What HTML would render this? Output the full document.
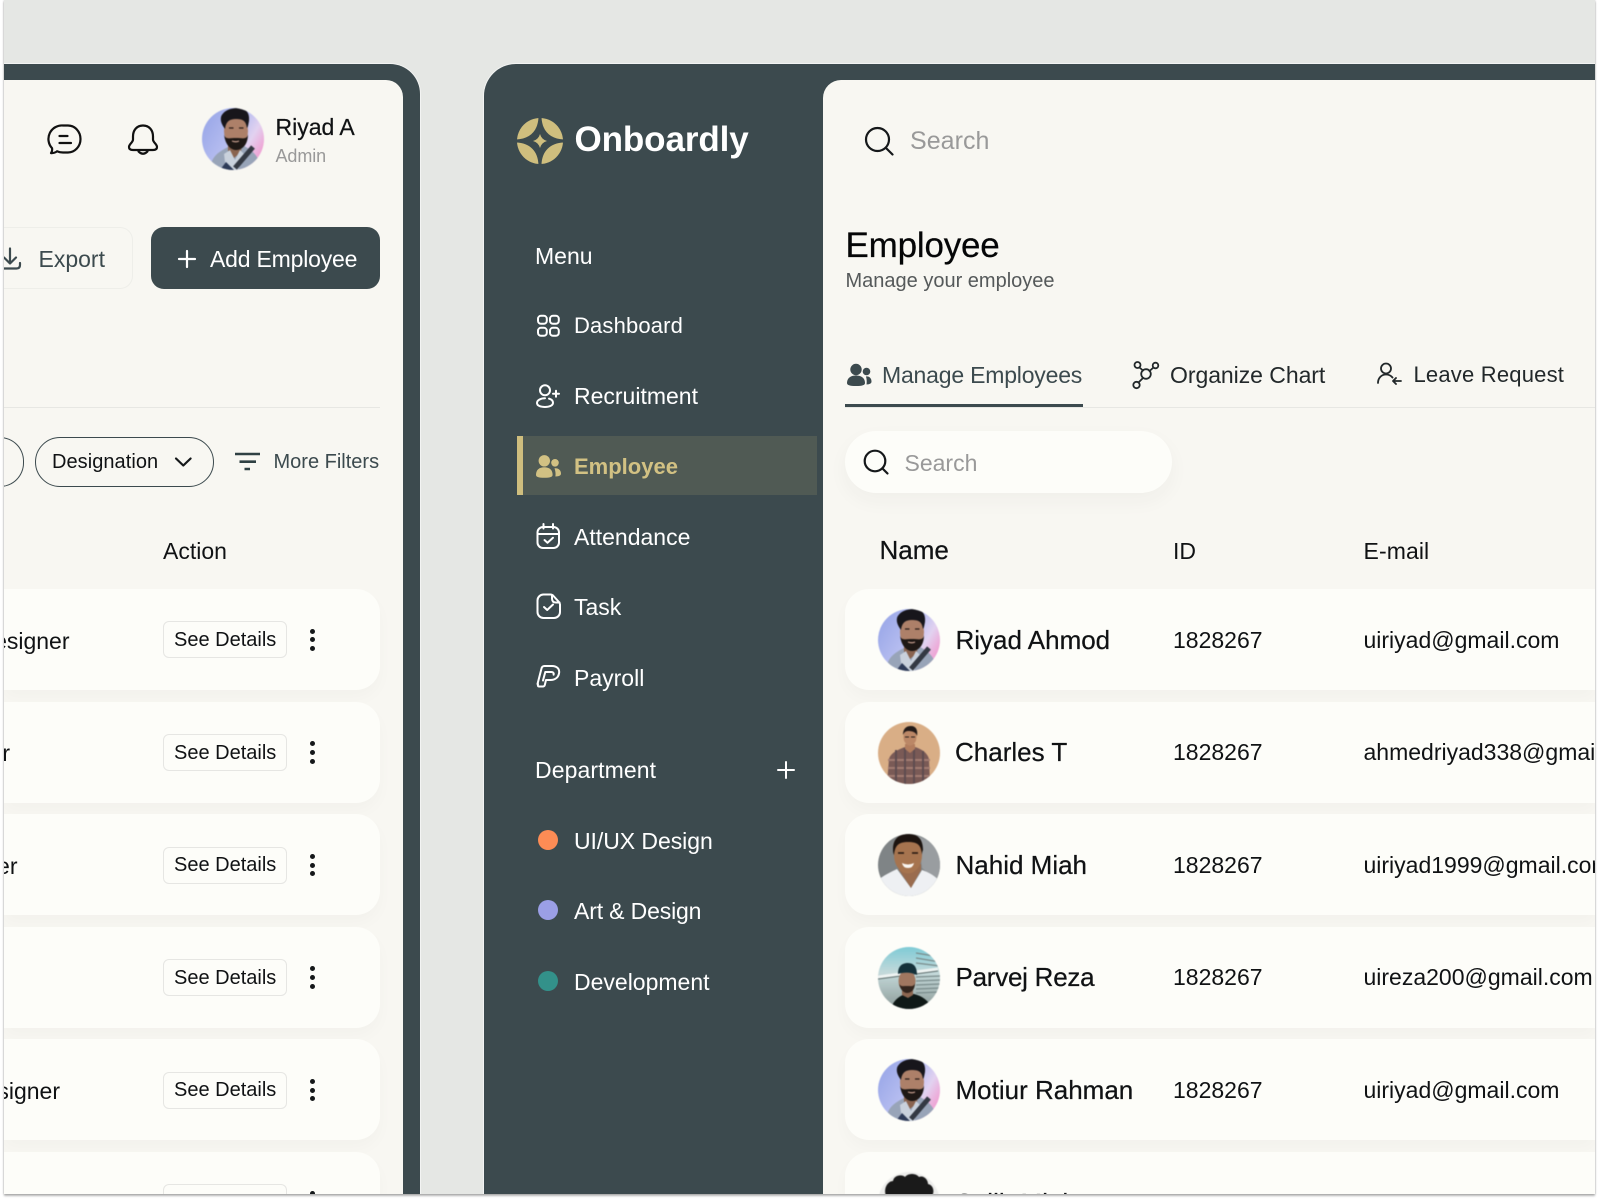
<!DOCTYPE html>
<html lang="en"><head><meta charset="utf-8"><title>Onboardly</title>
<style>
*{box-sizing:border-box;margin:0;padding:0}
html,body{width:1600px;height:1200px;overflow:hidden;background:#fff;font-family:"Liberation Sans",sans-serif}
#sh{position:absolute;left:4px;top:0;width:1591px;height:1194px;box-shadow:0 2px 2px rgba(0,0,0,.28),0 0 2px rgba(0,0,0,.22)}
#clip{position:absolute;left:4px;top:0;width:1591px;height:1194px;background:#e5e7e4;overflow:hidden}
#in{position:absolute;left:-4px;top:0;width:1600px;height:1194px}
.abs,.t,svg.i{position:absolute}
.t{white-space:nowrap;line-height:1;font-size:calc(var(--s)*1px);top:calc(var(--b)*1px - var(--s)*.8465px);color:#101214}
.w{color:#fff}.d{color:#3c4a4e}.g{color:#999}
.m{-webkit-text-stroke:.22px currentColor}
.dark{background:#3c4a4e;box-shadow:0 0 0 1px rgba(255,255,255,.55)}
.panel{background:#f8f7f2}
.row{position:absolute;height:101px;background:#fdfdf9;border-radius:24px;box-shadow:0 8px 16px rgba(60,60,40,.025)}
.rl{left:4px;width:376px;border-radius:0 24px 24px 0}
.rr{left:845px;width:750px;border-radius:24px 0 0 24px}
.see{position:absolute;left:163px;width:124px;height:37px;border:1px solid #e6e6e3;border-radius:6px;background:#fdfdf9}
.dot{position:absolute;left:310px;width:5.400px;height:5.400px;border-radius:50%;background:#15181a}
.av{position:absolute;left:878px;width:62px;height:62px;filter:blur(.45px)}
svg.i{overflow:hidden;left:0;top:0;width:1600px;height:1194px;pointer-events:none}
.st{fill:none;stroke-linecap:round;stroke-linejoin:round}
.cut{position:absolute;overflow:hidden;white-space:nowrap}
</style></head><body>
<div id="sh"></div>
<svg width="0" height="0" style="position:absolute">
<defs>
<clipPath id="cc"><circle cx="31" cy="31" r="31"/></clipPath>
<linearGradient id="gr" x1="0" y1="0" x2="1" y2=".6"><stop offset="0" stop-color="#93a2e6"/><stop offset=".55" stop-color="#b6bdf0"/><stop offset=".8" stop-color="#e2d2f0"/><stop offset="1" stop-color="#eea6d6"/></linearGradient>
<linearGradient id="gp" x1="0" y1="0" x2="0" y2="1"><stop offset="0" stop-color="#7fcbd6"/><stop offset=".42" stop-color="#c4d9da"/><stop offset="1" stop-color="#8d9b98"/></linearGradient>
<symbol id="a1" viewBox="0 0 62 62"><g clip-path="url(#cc)">
<rect width="62" height="62" fill="url(#gr)"/>
<path d="M8 62C9 50 14 45 26 39L40 37C48 41 56 45 60 62Z" fill="#98a4b8"/>
<path d="M26 34H40L39 44L32 50L26 44Z" fill="#8a6450"/>
<path d="M22 46L28 42L33 52L38 42L42 46L36 62H24Z" fill="#c9d1dc"/>
<path d="M18 62L24 54L32 62Z" fill="#2e3b58"/>
<path d="M51 39L33 60" stroke="#343943" stroke-width="5"/>
<ellipse cx="34" cy="23" rx="12" ry="15" fill="#ad8069"/>
<path d="M22 26C23 37 29 42 34 42C40 42 46 37 46 26C45 32 41 30 34 30C27 30 23 32 22 26Z" fill="#1e1815"/>
<path d="M19 9C21 3 28 0 36 0C43 0 48 4 47 13C46 18 46 19 45 20C44 13 41 11 34 11C28 11 24 13 23 21C21 18 18 14 19 9Z" fill="#17161b"/>
<path d="M27 20h4.500M37 20h4.500" stroke="#2a1d18" stroke-width="1.300"/>
<path d="M30 33q4 1.500 7 0" stroke="#c8a090" stroke-width="1.200" fill="none"/>
</g></symbol>
<symbol id="a2" viewBox="0 0 62 62"><g clip-path="url(#cc)">
<rect width="62" height="62" fill="#d9ae86"/>
<path d="M9 62L11 37C13 30 22 27 27 25H37C43 27 49 30 51 37L52 62Z" fill="#7a5a56"/>
<path d="M10 38H52M10 46H52M10 54H52" stroke="#a27c72" stroke-width="2"/>
<path d="M18 28V62M27 26V62M36 26V62M45 29V62" stroke="#5e4c50" stroke-width="2"/>
<path d="M27 22H37V27L32 31L27 27Z" fill="#b27d5e"/>
<ellipse cx="32" cy="15" rx="6.500" ry="8.500" fill="#bb8766"/>
<path d="M25 13C25 6 29 4 33 4C38 4 40 8 39 14C38 10 34 9 30 9C27 9 26 11 25 13Z" fill="#221a18"/>
<path d="M27 15h4M33 15h4" stroke="#2a201c" stroke-width="1"/>
</g></symbol>
<symbol id="a3" viewBox="0 0 62 62"><g clip-path="url(#cc)">
<rect width="62" height="62" fill="#7f8486"/>
<path d="M40 2L62 12V50L44 34Z" fill="#999da0"/>
<path d="M0 62V46C6 41 13 38 19 35L33 54L44 36C50 38 58 42 62 48V62Z" fill="#eef0f3"/>
<path d="M20 30H43L43 36L33 54L21 36Z" fill="#9a6c4e"/>
<ellipse cx="30" cy="21" rx="14" ry="18.500" fill="#a6744f"/>
<path d="M15 15C15 4 22 0 30 0C39 0 45 4 45 16C44 18 44 20 44 21C43 11 40 8 30 8C21 8 17 11 16 21C15 19 15 17 15 15Z" fill="#1c1410"/>
<path d="M20 19h6M34 19h6" stroke="#20140e" stroke-width="1.600"/>
<path d="M24 29Q30 32 36 29Q35 34 30 34Q25 34 24 29Z" fill="#fbf7f2"/>
</g></symbol>
<symbol id="a4" viewBox="0 0 62 62"><g clip-path="url(#cc)">
<rect width="62" height="62" fill="url(#gp)"/>
<path d="M0 30L60 22" stroke="#eef3f2" stroke-width="3"/>
<path d="M0 32L60 24" stroke="#5e6d6c" stroke-width="1"/>
<path d="M38 6L62 10M38 11L62 15M38 16L62 19M38 30L62 29M38 34L62 33M38 38L62 37M38 42L62 41M38 46L62 45" stroke="#7a8c8c" stroke-width="1.200"/>
<path d="M13 62C15 53 22 49 27 47H36C44 49 50 53 55 62Z" fill="#0f1917"/>
<path d="M24 40H35V48L30 51L24 48Z" fill="#8c6650"/>
<ellipse cx="29" cy="34" rx="8.500" ry="11" fill="#a07760"/>
<path d="M21 36C22 43 26 46 29 46C33 46 37 43 37 36C36 40 33 39 29 39C25 39 22 40 21 36Z" fill="#34261e"/>
<path d="M20 27C20 19 24 16 30 16C36 16 39 20 39 28C33 25 26 25 20 27Z" fill="#15313a"/>
</g></symbol>
<symbol id="a5" viewBox="0 0 62 62"><g clip-path="url(#cc)">
<rect width="62" height="62" fill="#ededeb"/>
<path d="M8 24C5 16 10 9 15 9C16 3 24 2 27 5C30 1 38 1 41 5C46 3 50 8 50 12C55 13 57 19 54 24Z" fill="#1a1a1a"/>
</g></symbol>
</defs></svg>

<div id="clip"><div id="in">
<!-- LEFT PANEL -->
<div class="abs dark" style="left:0;top:64px;width:420px;height:1130px;border-radius:0 30px 0 0"></div>
<div class="abs panel" style="left:0;top:80px;width:403px;height:1114px;border-radius:0 17px 0 0"></div>

<svg class="av" style="left:202px;top:108px"><use href="#a1" width="62" height="62"/></svg>
<div class="t m" style="left:275.500px;--b:135;--s:23">Riyad A</div>
<div class="t g" style="left:275.500px;--b:162;--s:18;letter-spacing:-.1px">Admin</div>

<div class="abs" style="left:0;top:227px;width:133px;height:62px;border:1.500px solid #eeeee9;border-left:0;border-radius:0 13px 13px 0"></div>
<div class="t d" style="left:38.500px;--b:267;--s:23">Export</div>
<div class="abs" style="left:151px;top:227px;width:229px;height:62px;background:#3c4a4e;border-radius:13px"></div>
<div class="t w" style="left:210px;--b:267;--s:23;letter-spacing:-.2px">Add Employee</div>

<div class="abs" style="left:4px;top:407px;width:376px;height:1px;background:#e7e7e3"></div>
<div class="abs" style="left:0;top:437px;width:24px;height:50px;border:1.500px solid #3c4a4e;border-left:0;border-radius:0 25px 25px 0"></div>
<div class="abs" style="left:35px;top:437px;width:179px;height:50px;border:1.500px solid #3c4a4e;border-radius:25px"></div>
<div class="t" style="left:52px;--b:469;--s:20;letter-spacing:.05px">Designation</div>
<div class="t d" style="left:273.500px;--b:469;--s:20">More Filters</div>
<div class="t" style="left:163px;--b:559;--s:23">Action</div>

<div class="row rl" style="top:589px"></div>
<div class="row rl" style="top:702px"></div>
<div class="row rl" style="top:814px"></div>
<div class="row rl" style="top:927px"></div>
<div class="row rl" style="top:1039px"></div>
<div class="row rl" style="top:1152px;height:42px;border-radius:0 24px 0 0"></div>

<div class="cut" style="left:4px;top:625px;width:70px;height:34px"><div class="t" style="right:4.500px;--b:24;--s:23">Designer</div></div>
<div class="cut" style="left:4px;top:737px;width:70px;height:34px"><div class="t" style="right:64px;--b:24;--s:23">Developer</div></div>
<div class="cut" style="left:4px;top:850px;width:70px;height:34px"><div class="t" style="right:56.500px;--b:24;--s:23">Manager</div></div>
<div class="cut" style="left:4px;top:1075px;width:70px;height:34px"><div class="t" style="right:14px;--b:24;--s:23">Designer</div></div>

<div class="see" style="top:621px"></div><div class="t" style="left:174px;--b:647;--s:20">See Details</div>
<div class="see" style="top:734px"></div><div class="t" style="left:174px;--b:760;--s:20">See Details</div>
<div class="see" style="top:846.500px"></div><div class="t" style="left:174px;--b:872;--s:20">See Details</div>
<div class="see" style="top:959px"></div><div class="t" style="left:174px;--b:985;--s:20">See Details</div>
<div class="see" style="top:1071.500px"></div><div class="t" style="left:174px;--b:1097;--s:20">See Details</div>
<div class="see" style="top:1184px;height:10px;border-bottom:0;border-radius:6px 6px 0 0"></div>

<div class="dot" style="top:628.500px"></div><div class="dot" style="top:637px"></div><div class="dot" style="top:646px"></div>
<div class="dot" style="top:741px"></div><div class="dot" style="top:750px"></div><div class="dot" style="top:758.500px"></div>
<div class="dot" style="top:854px"></div><div class="dot" style="top:862.500px"></div><div class="dot" style="top:871px"></div>
<div class="dot" style="top:966px"></div><div class="dot" style="top:975px"></div><div class="dot" style="top:983.500px"></div>
<div class="dot" style="top:1079px"></div><div class="dot" style="top:1087.500px"></div><div class="dot" style="top:1096px"></div>
<div class="dot" style="top:1191px;height:3px;border-radius:3px 3px 0 0"></div>

<!-- RIGHT PANEL -->
<div class="abs dark" style="left:484px;top:64px;width:1116px;height:1130px;border-radius:32px 0 0 0"></div>
<div class="abs panel" style="left:822.500px;top:80px;width:777.500px;height:1114px;border-radius:18px 0 0 0"></div>

<div class="t w" style="left:574.500px;--b:152;--s:35;font-weight:700;letter-spacing:-.1px">Onboardly</div>
<div class="t w" style="left:535px;--b:264;--s:23">Menu</div>
<div class="t w" style="left:574px;--b:334;--s:22;letter-spacing:.15px">Dashboard</div>
<div class="t w" style="left:574px;--b:404;--s:23">Recruitment</div>
<div class="abs" style="left:517px;top:436px;width:300px;height:59px;background:#505a54"></div>
<div class="abs" style="left:517px;top:436px;width:6px;height:59px;background:#cfbe7e"></div>
<div class="t" style="left:574px;--b:475;--s:22;color:#d2c183;font-weight:700">Employee</div>
<div class="t w" style="left:574px;--b:545;--s:23">Attendance</div>
<div class="t w" style="left:574px;--b:615;--s:23">Task</div>
<div class="t w" style="left:574px;--b:686;--s:23">Payroll</div>
<div class="t w" style="left:535px;--b:778;--s:23;letter-spacing:.1px">Department</div>
<div class="t w" style="left:574px;--b:849;--s:23;letter-spacing:-.05px">UI/UX Design</div>
<div class="t w" style="left:574px;--b:919;--s:23;letter-spacing:-.15px">Art &amp; Design</div>
<div class="t w" style="left:574px;--b:990;--s:23">Development</div>
<div class="abs" style="left:538px;top:830px;width:20px;height:20px;border-radius:50%;background:#fd8c55"></div>
<div class="abs" style="left:538px;top:900px;width:20px;height:20px;border-radius:50%;background:#9b9fe6"></div>
<div class="abs" style="left:538px;top:970.500px;width:20px;height:20px;border-radius:50%;background:#33918a"></div>

<div class="t g" style="left:910px;--b:150;--s:25;letter-spacing:.05px">Search</div>
<div class="t m" style="left:845.500px;--b:258;--s:35;color:#050607;letter-spacing:-.2px">Employee</div>
<div class="t" style="left:845.500px;--b:288;--s:20;color:#55595a">Manage your employee</div>
<div class="t d" style="left:882px;--b:383;--s:23;letter-spacing:-.2px">Manage Employees</div>
<div class="t" style="left:1170px;--b:383;--s:23;color:#22282a;letter-spacing:-.05px">Organize Chart</div>
<div class="t" style="left:1413.500px;--b:383;--s:22;color:#22282a;letter-spacing:.2px">Leave Request</div>
<div class="abs" style="left:845px;top:407px;width:750px;height:1px;background:#e7e7e3"></div>
<div class="abs" style="left:845px;top:403.500px;width:238px;height:3px;background:#3c4a4e"></div>
<div class="abs" style="left:845px;top:431px;width:327px;height:62px;border-radius:31px;background:#fdfdf9;box-shadow:0 8px 20px rgba(60,60,40,.04)"></div>
<div class="t g" style="left:904.500px;--b:471;--s:23">Search</div>
<div class="t m" style="left:879.500px;--b:559;--s:26">Name</div>
<div class="t" style="left:1173px;--b:559;--s:23">ID</div>
<div class="t" style="left:1363.500px;--b:559;--s:23;letter-spacing:.1px">E-mail</div>

<div class="row rr" style="top:589px"></div>
<div class="row rr" style="top:702px"></div>
<div class="row rr" style="top:814px"></div>
<div class="row rr" style="top:927px"></div>
<div class="row rr" style="top:1039px"></div>
<div class="row rr" style="top:1152px;height:42px;border-radius:24px 0 0 0"></div>

<svg class="av" style="top:609px"><use href="#a1" width="62" height="62"/></svg>
<svg class="av" style="top:721.500px"><use href="#a2" width="62" height="62"/></svg>
<svg class="av" style="top:834px"><use href="#a3" width="62" height="62"/></svg>
<svg class="av" style="top:946.500px"><use href="#a4" width="62" height="62"/></svg>
<svg class="av" style="top:1059px"><use href="#a1" width="62" height="62"/></svg>
<div class="cut" style="left:870px;top:1165px;width:80px;height:29px"><svg class="av" style="left:8px;top:6.500px"><use href="#a5" width="62" height="62"/></svg></div>

<div class="t m" style="left:955.500px;--b:649;--s:26">Riyad Ahmod</div>
<div class="t m" style="left:955px;--b:761;--s:26">Charles T</div>
<div class="t m" style="left:955.500px;--b:874;--s:26">Nahid Miah</div>
<div class="t m" style="left:955.500px;--b:986;--s:26;letter-spacing:-.25px">Parvej Reza</div>
<div class="t m" style="left:955.500px;--b:1099;--s:26">Motiur Rahman</div>
<div class="cut" style="left:950px;top:1180px;width:200px;height:14px"><div class="t m" style="left:5.500px;--b:32;--s:26">Sajib Miah</div></div>

<div class="t" style="left:1173px;--b:648;--s:23">1828267</div>
<div class="t" style="left:1173px;--b:760;--s:23">1828267</div>
<div class="t" style="left:1173px;--b:873;--s:23">1828267</div>
<div class="t" style="left:1173px;--b:985;--s:23">1828267</div>
<div class="t" style="left:1173px;--b:1098;--s:23">1828267</div>

<div class="t" style="left:1363.500px;--b:648;--s:23">uiriyad@gmail.com</div>
<div class="cut" style="left:1363.500px;top:730px;width:231.500px;height:40px"><div class="t" style="left:0;--b:30;--s:23">ahmedriyad338@gmail.com</div></div>
<div class="cut" style="left:1363.500px;top:843px;width:231.500px;height:40px"><div class="t" style="left:0;--b:30;--s:23">uiriyad1999@gmail.com</div></div>
<div class="t" style="left:1363.500px;--b:985;--s:23">uireza200@gmail.com</div>
<div class="t" style="left:1363.500px;--b:1098;--s:23">uiriyad@gmail.com</div>

<!-- ICONS -->
<svg class="i" viewBox="0 0 1600 1194">
<!-- logo -->
<g transform="translate(0 1)">
<circle cx="540" cy="140" r="23" fill="#cfbe7e"/>
<path d="M538.500 116H541.500C542 130 550 138 564 138.500V141.500C550 142 542 150 541.500 164H538.500C538 150 530 142 516 141.500V138.500C530 138 538 130 538.500 116Z" fill="#3c4a4e"/>
<path d="M540 133Q541.500 138.500 547 140Q541.500 141.500 540 147Q538.500 141.500 533 140Q538.500 138.500 540 133Z" fill="#cfbe7e"/>
</g>
<!-- top left icons -->
<g class="st" stroke="#111" stroke-width="2.200">
<path transform="translate(1 0)" d="M62 125.500h5a12.500 13.500 0 0 1 0 27h-5q-3.500 0-6-1.200q-2.500 2-6 1.800q1.600-2.200 1-5a13.500 13.500 0 0 1 11-22.600z"/>
<path d="M59.500 136h8M59.500 143h11.500"/>
<path d="M143 125.500c-6.500 0-10 5-10 11v3c0 3-4 4.500-4 7.500c0 2 1.500 3 4 3h20c2.500 0 4-1 4-3c0-3-4-4.500-4-7.500v-3c0-6-3.500-11-10-11z"/>
<path d="M138.500 151.500q4.500 4.500 9 0"/>
</g>
<g class="st" stroke="#3c4a4e" stroke-width="2.200">
<path d="M10 248.500v14.500M4 257.500l6 6l6-6M4 268.500h12.500q3.500 0 3.500-3.500v-2"/>
</g>
<path d="M179 259h16M187 251v16" stroke="#fff" stroke-width="2.200" fill="none" stroke-linecap="round"/>
<path d="M176 458.500l7.300 7l7.300-7" class="st" stroke="#15181a" stroke-width="2.200"/>
<path d="M235 454h25M239.500 461.700h16.500M244.500 469h5.500" stroke="#2f4043" stroke-width="2.600" fill="none"/>
<!-- sidebar -->
<g class="st" stroke="#fff" stroke-width="2">
<g transform="translate(0 .8)">
<rect x="538" y="315" width="8.800" height="8" rx="3"/><rect x="550" y="315" width="8.800" height="8" rx="3"/>
<rect x="538" y="327" width="8.800" height="8" rx="3"/><rect x="550" y="327" width="8.800" height="8" rx="3"/>
<circle cx="545" cy="389.500" r="5"/>
<path d="M545 397.500c-4.500 0-8 2-8 4.700s3.500 4 8 4s8-1.500 8-4.200c0-2-1.500-3.500-4-4.200"/>
<path d="M553 393h6M556 390v6"/>
</g>
<rect x="537.500" y="527" width="21.500" height="21" rx="5.500"/>
<path d="M538 534h21M543.500 524v4.500M553 524v4.500"/>
<path d="M544.500 540l3 2.800l5.500-5"/>
<path d="M543.500 594.500h7c1.500 0 2 .3 3 1.500l5 5.500c1 1 1.500 2 1.500 3v7.500a6 6 0 0 1-6 6h-10.500a6 6 0 0 1-6-6v-11.500a6 6 0 0 1 6-6z"/>
<path d="M552 595.500v3q0 4 4 4h3.500"/>
<path d="M544 607l3.200 3l5.800-5.500"/>
<path d="M537.500 684l4-15.500q.6-2.500 3-2.500h7.500c5 0 8 3 7 7.500c-.8 4-4 6.500-8.500 6.500h-4.500l-1.200 5q-.4 1.500-2 1.500h-4q-1.300 0-.8-2.500z"/>
<path d="M543 680.500l2.300-8.500h6c1.800 0 2.700 1 2.300 2.700"/>
<path d="M778 770h16M786 762v16"/>
</g>
<g fill="#d2c183" transform="translate(0 .8)">
<circle cx="544.300" cy="460" r="5.700"/><circle cx="555" cy="462" r="3.800"/>
<path d="M536 474c0-5 3.500-7.500 8.300-7.500s8.300 2.500 8.300 7.500c0 2-2 3-8.300 3s-8.300-1-8.300-3z"/>
<path d="M554.500 467.500c3.800-.5 6.500 1.800 6.500 5.200c0 2-1.500 2.800-5.600 3c.5-3-.1-5.800-.9-8.200z"/>
</g>
<!-- search -->
<g class="st" stroke="#15181a" stroke-width="2.200">
<circle cx="877.500" cy="139.500" r="11.500"/><path d="M886 148l6.500 6.500"/>
<circle cx="875" cy="461" r="10.300"/><path d="M882.500 468.500l5 5"/>
</g>
<!-- tabs -->
<g fill="#3c4a4e">
<circle cx="856" cy="369.500" r="5.700"/><circle cx="866.500" cy="371.500" r="3.800"/>
<path d="M847 383c0-5 3.800-7.500 9-7.500s9 2.500 9 7.500c0 2-2.500 3-9 3s-9-1-9-3z"/>
<path d="M866 376.500c3.300-.5 5.500 1.800 5.500 5c0 1.800-1.300 2.800-5 3c.4-3 .2-5.600-.5-8z"/>
</g>
<g class="st" stroke="#22282a" stroke-width="1.800">
<circle cx="1146" cy="374" r="4.800"/><circle cx="1137.500" cy="365" r="3"/><circle cx="1155.500" cy="365.500" r="2.800"/><circle cx="1136.500" cy="385" r="3.200"/>
<path d="M1139.500 367.500l3.500 3M1153.500 367.500l-4 3.500M1143 378l-4.500 4.500"/>
<g transform="translate(-2 0)">
<circle cx="1388" cy="368.500" r="5"/>
<path d="M1380 383c0-5 3.500-8.500 8-8.500c3 0 5 1.200 6.500 3"/>
<path d="M1403 381h-8M1398 378l-3 3l3 3"/>
</g>
</g>
</svg>
</div></div>
</body></html>
